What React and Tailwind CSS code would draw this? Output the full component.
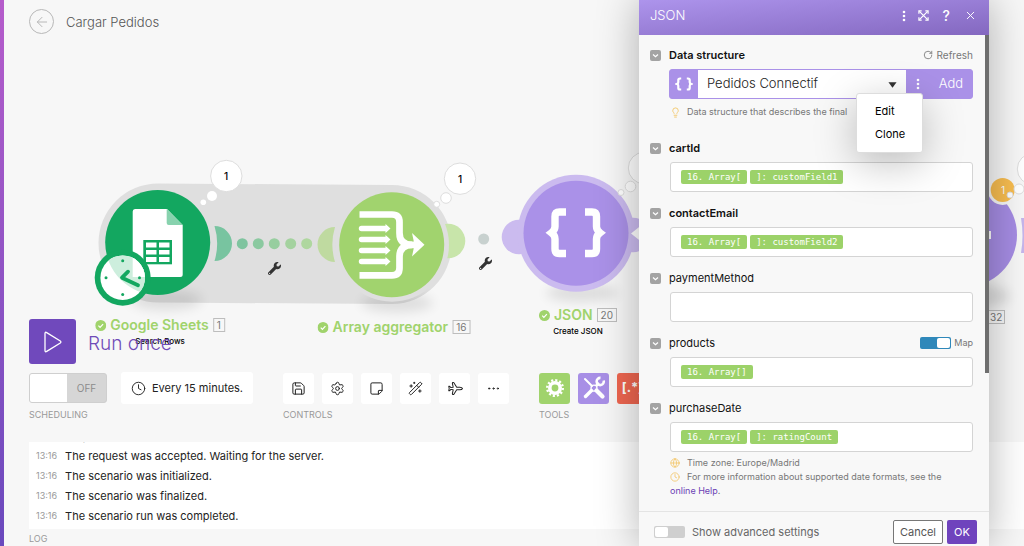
import React from "react";
import { FaWrench } from "react-icons/fa";
import { FiClock, FiGlobe } from "react-icons/fi";
import {
  Save,
  Settings,
  StickyNote,
  WandSparkles,
  Plane,
  MoreHorizontal,
  RotateCw,
  Lightbulb,
  ArrowLeft,
  X,
} from "lucide-react";

const INTER = "font-['Inter','Liberation_Sans',sans-serif]";

function CheckBadge() {
  return (
    <svg viewBox="0 0 12 12" className="size-[11px] shrink-0" aria-hidden="true">
      <circle cx="6" cy="6" r="6" fill="#a0d36c" />
      <path d="M3.5 6.2l1.8 1.8 3.3-3.6" fill="none" stroke="#fff" strokeWidth="1.3" />
    </svg>
  );
}

function NodeLabel({ place, title, id, caption }) {
  return (
    <div className={`absolute -translate-x-1/2 flex flex-col items-center whitespace-nowrap ${place}`}>
      <div className="flex items-center gap-1">
        <CheckBadge />
        <span className="text-[14px] leading-[18px] font-semibold text-[#a0d36c]">{title}</span>
        <span className="border border-[#bdbdbd] px-[3px] text-[10px] leading-3 text-[#777]">{id}</span>
      </div>
      {caption && <span className="text-[8px] leading-[14px] font-medium text-black">{caption}</span>}
    </div>
  );
}

function Count({ place }) {
  return <span className={`absolute w-8 text-center text-[10px] leading-8 font-medium text-black ${place}`}>1</span>;
}

function Diagram() {
  return (
    <div className="absolute inset-0 overflow-hidden">
      <svg width="1040" height="400" viewBox="0 0 1040 400" className="absolute top-0 left-0 max-w-none" aria-hidden="true">
        <defs>
          <filter id="soft" x="-50%" y="-50%" width="200%" height="200%">
            <feGaussianBlur stdDeviation="6" />
          </filter>
          <clipPath id="clockFace"><circle cx="122.7" cy="277.7" r="22.3" /></clipPath>
        </defs>
        <path d="M158 183.500L392 185A59.500 59.500 0 0 1 392 304L158 302.500A59.500 59.500 0 0 1 158 183.500Z" fill="#dfdfdf" />
        <g filter="url(#soft)" fill="#000" opacity="0.1">
          <ellipse cx="166" cy="300" rx="36" ry="10" />
          <ellipse cx="397" cy="303" rx="36" ry="9" />
          <ellipse cx="582" cy="293" rx="36" ry="9" />
          <ellipse cx="970" cy="296" rx="40" ry="12" />
        </g>

        <circle cx="157.700" cy="242.500" r="52.500" fill="#13a760" />
        <path d="M135 209h32l15.700 16v49.500a2.500 2.500 0 0 1-2.500 2.500h-45a2.500 2.500 0 0 1-2.500-2.500v-63a2.500 2.500 0 0 1 2.300-2.500z" fill="#fff" />
        <path d="M166.700 209l16 16h-14a2 2 0 0 1-2-2z" fill="#88d2ae" />
        <rect x="143.300" y="240" width="28.700" height="24.300" fill="#13a760" />
        <g fill="#fff">
          <rect x="146" y="242.500" width="10.500" height="5" /><rect x="159" y="242.500" width="10.500" height="5" />
          <rect x="146" y="250" width="10.500" height="4.500" /><rect x="159" y="250" width="10.500" height="4.500" />
          <rect x="146" y="257" width="10.500" height="5" /><rect x="159" y="257" width="10.500" height="5" />
        </g>
        <circle cx="122.700" cy="277.700" r="28" fill="#13a760" />
        <circle cx="122.700" cy="277.700" r="22.300" fill="#fff" />
        <g clipPath="url(#clockFace)">
          <circle cx="157.700" cy="242.500" r="52.500" fill="#cdeedd" />
          <rect x="132.700" y="209" width="50" height="68" fill="#fff" />
        </g>
        <path d="M128 271.700l-6 6 16 7.500" fill="none" stroke="#13a760" strokeWidth="3.800" strokeLinecap="round" strokeLinejoin="round" />
        <g fill="#13a760">
          <circle cx="122.700" cy="260.700" r="1.500" /><circle cx="139.500" cy="277.700" r="1.500" />
          <circle cx="122.700" cy="294.500" r="1.500" /><circle cx="106" cy="277.700" r="1.500" />
        </g>

        <path d="M214.500 226A17.500 17.500 0 0 1 214.500 261A60 60 0 0 0 214.500 226Z" fill="#78c4a0" />
        <circle cx="242.300" cy="243.700" r="5.500" fill="#7fc49f" />
        <circle cx="258.300" cy="243.700" r="5.500" fill="#8bc9a0" />
        <circle cx="274.300" cy="243.700" r="5.500" fill="#97ce9f" />
        <circle cx="290.700" cy="243.700" r="5.500" fill="#a4d29f" />
        <circle cx="306.700" cy="243.700" r="5.500" fill="#afd79f" />
        <path d="M335 227A17.500 17.500 0 0 0 335 262A60 60 0 0 1 335 227Z" fill="#bfdaa0" />

        <circle cx="448" cy="241" r="17.300" fill="#c8e5aa" />
        <circle cx="392" cy="244.700" r="57" fill="#dfdfdf" />
        <circle cx="391.700" cy="244.700" r="52.500" fill="#a1d36e" />
        <g fill="none" stroke="#fff" strokeWidth="6.700">
          <path d="M359.500 214.500H392Q399.500 214.500 399.500 222V233Q399.500 244.800 412 244.800H416" />
          <path d="M359.500 275.300H392Q399.500 275.300 399.500 268V257Q399.500 244.800 412 244.800" />
        </g>
        <path d="M412 233l12.500 11.700L412 256.500l2.500-11.700z" fill="#fff" />
        <g stroke="#fff" strokeWidth="5.400" strokeLinecap="round">
          <path d="M361.500 228.500H386" /><path d="M361.500 239.500H386" /><path d="M361.500 250.500H386" /><path d="M361.500 261.500H386" />
        </g>
        <g fill="#fff">
          <path d="M385.500 224l5 4.500-5 4.500z" /><path d="M385.500 235l5 4.500-5 4.500z" />
          <path d="M385.500 246l5 4.500-5 4.500z" /><path d="M385.500 257l5 4.500-5 4.500z" />
        </g>

        <circle cx="483.700" cy="239" r="5.500" fill="#c8d1cf" />

        <circle cx="519" cy="237" r="17.300" fill="#cbbbef" />
        <circle cx="633" cy="235" r="17.300" fill="#cbbbef" />
        <circle cx="576" cy="233.300" r="58.500" fill="#cbbbef" />
        <circle cx="576" cy="233.300" r="52.500" fill="#aa91e8" />
        <path d="M631 233.500l10-8v16z" fill="#fff" />
        <g fill="none" stroke="#fff" strokeWidth="7.400">
          <path d="M566 212H559.500Q555 212 555 216.500V226.500Q555 230 551.500 232.800Q555 235.500 555 239V249Q555 253.500 559.500 253.500H566" />
          <path d="M585 212H592Q596.500 212 596.500 216.500V226.500Q596.500 230 600 232.800Q596.500 235.500 596.500 239V249Q596.500 253.500 592 253.500H585" />
        </g>

        <g fill="#fff" stroke="#dedede">
          <circle cx="226.300" cy="176" r="15.700" />
          <circle cx="212" cy="196" r="5" stroke="none" /><circle cx="203.300" cy="202.300" r="2.800" stroke="none" />
          <circle cx="460" cy="178.700" r="15.700" />
          <circle cx="446" cy="198" r="5.300" /><circle cx="436.700" cy="204.300" r="3" />
          <circle cx="644" cy="168" r="15.700" />
          <circle cx="630.500" cy="186.500" r="5.300" /><circle cx="621" cy="192.500" r="3" />
        </g>

        <circle cx="965" cy="235" r="52" fill="#a58ce3" />
        <path d="M986 231h5v8h-5z" fill="#fff" />
        <path d="M1021 218h10v35h-10q3-17 0-35z" fill="#c6b6ec" />
        <circle cx="1002.700" cy="190" r="15" fill="#f7f7f7" />
        <circle cx="1002.700" cy="190" r="12" fill="#f8bd50" />
        <g fill="#fff" stroke="#dedede">
          <circle cx="1033" cy="169" r="15.700" /><circle cx="1019" cy="189" r="5" /><circle cx="1010" cy="195" r="3" />
        </g>
      </svg>
      <Count place="left-[210px] top-[160px]" />
      <Count place="left-[444px] top-[163px]" />
      <span className="absolute top-[182px] left-[991px] w-6 text-center text-[10px] leading-4 text-white">1</span>
      <FaWrench className="absolute top-[262px] left-[268px] size-[13px] text-[#333]" />
      <FaWrench className="absolute top-[257px] left-[479px] size-[13px] text-[#333]" />
      <NodeLabel place="left-[160px] top-[316px]" title="Google Sheets" id="1" caption="Search Rows" />
      <NodeLabel place="left-[394px] top-[318px]" title="Array aggregator" id="16" />
      <NodeLabel place="left-[578px] top-[306px]" title="JSON" id="20" caption="Create JSON" />
      <span className="absolute top-[310px] left-[987px] border border-[#bdbdbd] px-[2px] text-[10px] leading-3 text-[#777]">32</span>
    </div>
  );
}

function IconButton({ label, color = "bg-white text-[#222]", children }) {
  return (
    <button type="button" aria-label={label} className={`flex size-[31px] shrink-0 items-center justify-center rounded-[3px] ${color}`}>
      {children}
    </button>
  );
}

function Group({ title, children }) {
  return (
    <section className="flex shrink-0 flex-col gap-[3px]">
      <div className="flex h-8 items-center gap-2">{children}</div>
      <h2 className="text-[9px] leading-4 text-[#999]">{title}</h2>
    </section>
  );
}

const CONTROLS = [
  ["Save", Save, ""],
  ["Scenario settings", Settings, ""],
  ["Notes", StickyNote, "-scale-y-100"],
  ["Auto-align", WandSparkles, ""],
  ["Explain flow", Plane, "rotate-45"],
  ["More", MoreHorizontal, ""],
];

function GearIcon() {
  return (
    <svg viewBox="0 0 20 20" className="size-5" aria-hidden="true">
      <circle cx="10" cy="10" r="5.200" fill="none" stroke="#fff" strokeWidth="3.600" />
      <circle cx="10" cy="10" r="7.800" fill="none" stroke="#fff" strokeWidth="2.400" strokeDasharray="2.100 1.984" />
    </svg>
  );
}

function ToolsIcon() {
  return (
    <svg viewBox="0 0 24 24" className="size-6" aria-hidden="true">
      <g stroke="#fff" fill="none">
        <path d="M3 3l7 7" strokeWidth="2" strokeLinecap="round" />
        <path d="M14.500 14.500l6 6" strokeWidth="4.200" strokeLinecap="round" />
        <path d="M9.500 14.500l-6 6" strokeWidth="3.400" strokeLinecap="round" />
        <path d="M14 10l3-3" strokeWidth="2.600" />
        <path d="M21.700 4.500a3.600 3.600 0 1 1-3.200-2.600" strokeWidth="2.600" />
        <circle cx="12" cy="12.200" r="3" strokeWidth="1.300" />
      </g>
    </svg>
  );
}

const LOG = [
  "Requesting the server to start.",
  "The request was accepted. Waiting for the server.",
  "The scenario was initialized.",
  "The scenario was finalized.",
  "The scenario run was completed.",
];

function Workspace() {
  return (
    <main className="relative flex min-w-0 flex-1 flex-col pl-[25px]">
      <header className="flex items-center gap-3 pt-[9px]">
        <button type="button" aria-label="Back" className="flex size-[25px] items-center justify-center rounded-full border border-[#b8b8b8] text-[#b8b8b8]">
          <ArrowLeft size={16} strokeWidth={1.5} />
        </button>
        <h1 className="text-[13px] leading-5 font-light text-[#555]">Cargar Pedidos</h1>
      </header>

      <div className="mt-auto flex items-center gap-3 pt-8">
        <button type="button" aria-label="Run" className="flex h-[45px] w-[47px] items-center justify-center rounded-[3px] bg-[#7049bc]">
          <svg viewBox="0 0 20 22" className="h-[22px] w-5" aria-hidden="true">
            <path d="M2 2.500Q2 .6 3.700 1.600L17.300 10Q18.500 11 17.300 12L3.700 20.400Q2 21.400 2 19.500Z" fill="none" stroke="#fff" strokeWidth="1.300" />
          </svg>
        </button>
        <span className="pt-1 text-[19px] leading-6 font-light text-[#6f4bb8]">Run once</span>
      </div>

      <div className="mt-2 flex gap-[30px]">
        <Group title="SCHEDULING">
          <label className="relative flex h-[30px] w-[78px] items-center rounded-[3px] border border-[#cfcfcf] bg-[#d6d6d6]">
            <input type="checkbox" className="peer sr-only" aria-label="Scheduling" />
            <span className="h-full w-[37px] rounded-l-[2px] bg-white" />
            <span className="flex-1 text-center text-[10px] text-[#8c8c8c]">OFF</span>
          </label>
          <button type="button" className="ml-[6px] flex h-8 w-[132px] items-center gap-[6px] rounded-[3px] bg-white pl-[10px] text-[11px] text-[#222]">
            <FiClock size={15} strokeWidth={1.5} />
            Every 15 minutes.
          </button>
        </Group>
        <Group title="CONTROLS">
          {CONTROLS.map(([label, Icon, turn]) => (
            <IconButton key={label} label={label}>
              <Icon size={15} strokeWidth={1.6} className={turn} />
            </IconButton>
          ))}
        </Group>
        <Group title="TOOLS">
          <IconButton label="Flow control" color="bg-[#a0d36c]"><GearIcon /></IconButton>
          <IconButton label="Tools" color="bg-[#a88fe6]"><ToolsIcon /></IconButton>
          <IconButton label="Text parser" color="bg-[#ee6650]">
            <span className="text-[13px] font-bold text-white">[.*]</span>
          </IconButton>
        </Group>
      </div>

      <ul className="mt-[19px] flex h-[87px] flex-col justify-end overflow-hidden bg-white pb-[3px] pl-[7px]">
        {LOG.map((line) => (
          <li key={line} className="flex h-5 shrink-0 items-center gap-2">
            <time className="text-[9px] leading-5 text-[#999]">13:16</time>
            <span className="text-[11px] leading-5 text-[#222]">{line}</span>
          </li>
        ))}
      </ul>
      <h2 className="pt-[3px] text-[9px] leading-[14px] text-[#999]">LOG</h2>
    </main>
  );
}

function Collapse({ label }) {
  return (
    <button type="button" aria-label={`Collapse ${label}`} className="size-[11px] shrink-0 rounded-[2px] bg-[#a3a3a3]">
      <svg viewBox="0 0 11 11" className="size-[11px]" aria-hidden="true">
        <path d="M3 4.500l2.500 2.300L8 4.500" fill="none" stroke="#fff" strokeWidth="1.200" />
      </svg>
    </button>
  );
}

function Field({ name, tokens = [], bold, children }) {
  return (
    <div className="flex flex-col gap-1">
      <div className="flex h-5 items-center gap-2">
        <Collapse label={name} />
        <label htmlFor={name} className={`text-[11px] text-[#111] ${bold ? "font-semibold" : ""}`}>{name}</label>
        {children}
      </div>
      <div className="ml-5 flex h-[30px] items-center gap-[3px] rounded-[3px] border border-[#d4d4d4] bg-white px-[10px]">
        {tokens.map((t) => (
          <span key={t} className="rounded-[2px] bg-[#9cd269] px-[6px] font-['DejaVu_Sans_Mono',monospace] text-[9px] leading-[14px] whitespace-pre text-white">{t}</span>
        ))}
        <input id={name} type="text" className="h-full min-w-0 flex-1 bg-transparent text-[11px] outline-none" />
      </div>
    </div>
  );
}

function Dots({ size }) {
  return (
    <svg viewBox="0 0 4 12" className={size} fill="currentColor" aria-hidden="true">
      <circle cx="2" cy="2" r="1.300" /><circle cx="2" cy="6" r="1.300" /><circle cx="2" cy="10" r="1.300" />
    </svg>
  );
}

function ExpandIcon() {
  return (
    <svg viewBox="0 0 12 12" className="size-[11px]" fill="none" stroke="currentColor" strokeWidth="1.300" aria-hidden="true">
      <path d="M1 4V1h3M8 1h3v3M11 8v3H8M4 11H1V8" />
      <path d="M1.500 1.500l9 9M10.500 1.500l-9 9" />
    </svg>
  );
}

function BracesIcon() {
  return (
    <svg viewBox="0 0 18 14" className="h-[14px] w-[18px]" fill="none" stroke="currentColor" strokeWidth="2.200" aria-hidden="true">
      <path d="M6.200 1.500H5Q3.300 1.500 3.300 3V5.300Q3.300 6.500 1.800 7Q3.300 7.500 3.300 8.700V11Q3.300 12.500 5 12.500H6.200" />
      <path d="M11.800 1.500H13Q14.700 1.500 14.700 3V5.300Q14.700 6.500 16.200 7Q14.700 7.500 14.700 8.700V11Q14.700 12.500 13 12.500H11.800" />
    </svg>
  );
}

function ModuleDialog() {
  return (
    <div role="dialog" aria-label="JSON" className="absolute top-0 right-[35px] flex min-h-full w-[350px] flex-col bg-[#f8f8f8] shadow-[0_0_40px_rgba(0,0,0,0.3)]">
      <header className="flex h-[35px] shrink-0 items-center bg-linear-to-br from-[#ad94ec] to-[#8468c0] pt-0 pr-3 pb-1 pl-[11px] text-white">
        <h2 className="flex-1 text-[13px] font-light">JSON</h2>
        <div className="flex items-center gap-3">
          <button type="button" aria-label="More options"><Dots size="h-3 w-1" /></button>
          <button type="button" aria-label="Expand"><ExpandIcon /></button>
          <button type="button" aria-label="Help" className="px-[2px] text-[14px] font-medium">?</button>
          <button type="button" aria-label="Close"><X size={13} strokeWidth={1.8} /></button>
        </div>
      </header>

      <div className="relative flex flex-1 flex-col gap-[11px] pt-[10px] pr-4 pb-3 pl-[11px]">
        <div className="absolute top-0 right-0 h-[338px] w-1 bg-[#6e6e6e]" />
        <div className="relative mb-[2px] flex flex-col">
          <div className="mb-1 flex h-5 items-center gap-2">
            <Collapse label="Data structure" />
            <label htmlFor="structure" className="flex-1 text-[11px] font-semibold text-[#111]">Data structure</label>
            <button type="button" className="flex items-center gap-1 text-[10px] text-[#777]">
              <RotateCw size={10} strokeWidth={2} />
              Refresh
            </button>
          </div>
          <div className="ml-[19px] flex h-[30px] rounded-[3px] border border-[#aa91e8] bg-[#aa91e8] text-white">
            <span className="flex w-7 items-center justify-center"><BracesIcon /></span>
            <div className="relative min-w-0 flex-1">
              <select id="structure" className="h-full w-full appearance-none bg-white pl-[9px] text-[13px] font-light text-[#222] outline-none">
                <option>Pedidos Connectif</option>
              </select>
              <svg viewBox="0 0 10 6" className="pointer-events-none absolute top-[12px] right-[9px] h-[6px] w-[9px]" aria-hidden="true">
                <path d="M.5 0h9L5 6z" fill="#333" />
              </svg>
            </div>
            <button type="button" aria-label="Data structure options" className="flex w-6 items-center justify-center"><Dots size="h-3 w-1" /></button>
            <button type="button" className="w-[42px] text-[13px] font-light">Add</button>
          </div>
          <p className="ml-5 flex h-[26px] items-center gap-[6px] text-[9px] text-[#777]">
            <Lightbulb size={11} strokeWidth={2} className="text-[#f3c76a]" />
            Data structure that describes the final
          </p>
          <div role="menu" className="absolute top-[48px] right-[50px] z-10 flex w-[67px] flex-col rounded-[3px] border border-[#ddd] bg-white py-[6px] pl-[18px] text-[11px] text-black shadow-[0_10px_40px_rgba(0,0,0,0.25)]">
            <button type="button" role="menuitem" className="h-[23px] text-left">Edit</button>
            <button type="button" role="menuitem" className="h-[23px] text-left">Clone</button>
          </div>
        </div>

        <Field name="cartId" bold tokens={["16. Array[", "]: customField1"]} />
        <Field name="contactEmail" bold tokens={["16. Array[", "]: customField2"]} />
        <Field name="paymentMethod" />
        <Field name="products" tokens={["16. Array[]"]}>
          <label className="ml-auto flex items-center gap-[3px] text-[9px] text-[#777]">
            <input type="checkbox" defaultChecked className="peer sr-only" />
            <span className="flex h-3 w-[31px] justify-end rounded-[2px] bg-[#2f88ba] p-px">
              <span className="w-[13px] rounded-[2px] bg-white" />
            </span>
            Map
          </label>
        </Field>
        <div>
          <Field name="purchaseDate" tokens={["16. Array[", "]: ratingCount"]} />
          <div className="mt-1 ml-5 text-[9px] leading-[14px] text-[#777]">
            <p><FiGlobe size={10} className="mr-[7px] inline align-[-2px] text-[#f3c76a]" />Time zone: Europe/Madrid</p>
            <p>
              <FiClock size={10} className="mr-[7px] inline align-[-2px] text-[#f3c76a]" />
              For more information about supported date formats, see the
              <br />
              <a href="#help" className="text-[#6b3fb5]">online Help</a>.
            </p>
          </div>
        </div>
      </div>

      <footer className="flex shrink-0 items-center gap-1 border-t border-[#e4e4e4] bg-[#f8f8f8] pt-2 pr-3 pb-[2px] pl-[15px]">
        <label className="flex flex-1 items-center gap-[7px] text-[11px] text-[#666]">
          <input type="checkbox" className="peer sr-only" />
          <span className="flex h-3 w-[31px] rounded-[2px] bg-[#cfcfcf] p-px">
            <span className="w-[13px] rounded-[2px] bg-white" />
          </span>
          Show advanced settings
        </label>
        <button type="button" className="h-6 w-[50px] rounded-[2px] border border-[#777] bg-white text-[11px] text-[#555]">Cancel</button>
        <button type="button" className="h-6 w-[30px] rounded-[2px] bg-[#6f43bd] text-[11px] text-white">OK</button>
      </footer>
    </div>
  );
}

export default function App() {
  return (
    <div className={`relative flex min-h-screen overflow-hidden bg-[#f7f7f7] ${INTER}`}>
      <div className="w-1 shrink-0 bg-linear-to-b from-[#b65ccb] to-[#6a49bd]" />
      <Diagram />
      <Workspace />
      <ModuleDialog />
    </div>
  );
}
